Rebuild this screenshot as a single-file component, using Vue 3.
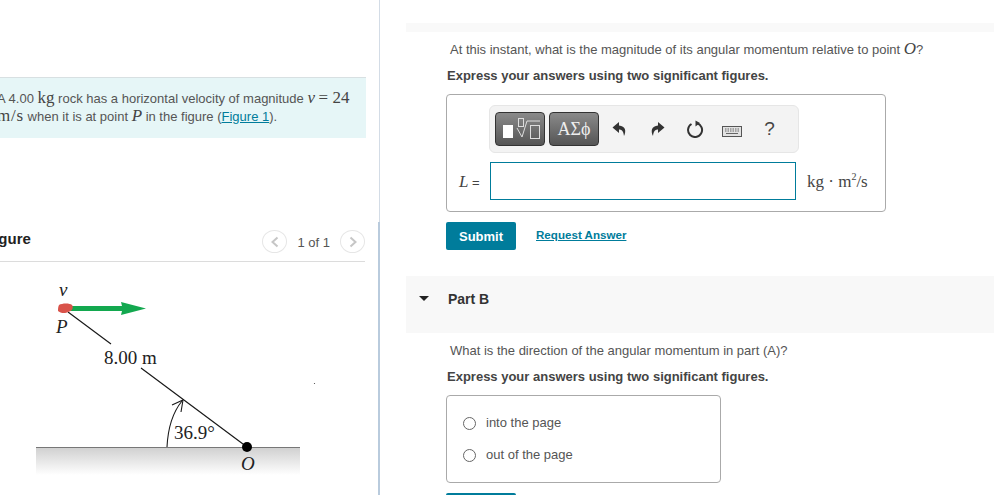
<script setup>
const choices = ['into the page', 'out of the page']
</script>

<template>
  <div class="page">
    <section class="left">
      <div class="intro">
        <p class="intro-text">A 4.00 <span class="m">kg</span> rock has a horizontal velocity of magnitude <i class="m">v</i> <span class="m">= 24</span><br><span class="m unit-ms">m/s</span> when it is at point <i class="m big">P</i> in the figure (<a>Figure 1</a>).</p>
      </div>
      <div class="figure">
        <header class="fig-head">
          <h2>Figure</h2>
          <div class="pager">
            <span class="circle"><svg width="10" height="12" viewBox="0 0 10 12"><path d="M7.5 1.5 2.5 6l5 4.5" fill="none" stroke="#c6c6c6" stroke-width="2"/></svg></span>
            <span class="count">1 of 1</span>
            <span class="circle"><svg width="10" height="12" viewBox="0 0 10 12"><path d="M2.5 1.5 7.5 6l-5 4.5" fill="none" stroke="#c6c6c6" stroke-width="2"/></svg></span>
          </div>
        </header>
        <svg class="diagram" width="378" height="225" viewBox="0 270 378 225">
          <defs>
            <linearGradient id="ground" x1="0" y1="0" x2="0" y2="1">
              <stop offset="0" stop-color="#cfcfcf"/>
              <stop offset="1" stop-color="#ffffff"/>
            </linearGradient>
          </defs>
          <rect x="36" y="447" width="264" height="28" fill="url(#ground)"/>
          <path d="M36 447.5H300" stroke="#777" stroke-width="1.2"/>
          <path d="M68 312 111 344M141 368 247 447" stroke="#1a1a1a" stroke-width="1.2" fill="none"/>
          <path d="M167 447C168 427 173 412 182 401" stroke="#1a1a1a" stroke-width="1.1" fill="none"/>
          <path d="M172 405 183 400 181 412" stroke="#1a1a1a" stroke-width="1.1" fill="none"/>
          <path d="M70 306H122L121 302 146 308.500 121 315 122 311H70Z" fill="#13a84f"/>
          <path d="M59 305C62 303 70 303 72 305 74 308 72 311 68 312 65 314 60 313 58 311 58 309 58 307 59 305Z" fill="#d9534a"/>
          <circle cx="247" cy="447" r="5" fill="#000"/>
          <circle cx="314.500" cy="383.500" r="0.600" fill="#444"/>
          <text x="59" y="296" class="fig-i">v</text>
          <text x="56" y="333" class="fig-i">P</text>
          <text x="104" y="364" class="fig-t">8.00 m</text>
          <text x="174" y="439" class="fig-t">36.9°</text>
          <text x="241" y="470" class="fig-i">O</text>
        </svg>
      </div>
    </section>

    <main class="right">
      <div class="strip-top"></div>
      <p class="question first">At this instant, what is the magnitude of its angular momentum relative to point <i class="m big">O</i>?</p>
      <p class="instruct">Express your answers using two significant figures.</p>

      <div class="answer">
        <div class="toolbar">
          <button class="tool">
            <svg width="42" height="26" viewBox="0 0 42 26">
              <rect x="4" y="9" width="10" height="13" fill="#fff"/>
              <rect x="19.500" y="2.500" width="5" height="8" fill="none" stroke="#ddd"/>
              <path d="M18 12l5 9 5-16h13" fill="none" stroke="#ddd"/>
              <rect x="31.500" y="9.500" width="9" height="13" fill="none" stroke="#ddd"/>
            </svg>
          </button>
          <button class="tool greek">ΑΣϕ</button>
          <span class="icon"><svg width="15" height="16" viewBox="0 0 15 16"><path d="M7 1 0.500 6.500 7 12V8.500c3 0 4.500 2 5 6.500 2.500-5 1.500-10-5-10.500Z" fill="#333"/></svg></span>
          <span class="icon"><svg width="15" height="16" viewBox="0 0 15 16"><path d="M8 1l6.500 5.500L8 12V8.500c-3 0-4.500 2-5 6.500C.5 10 1.500 5 8 4.500Z" fill="#333"/></svg></span>
          <span class="icon"><svg width="18" height="18" viewBox="0 0 18 18"><path d="M5.500 4A7 7 0 1 0 11 3.300" fill="none" stroke="#333" stroke-width="2"/><path d="M9.500 .5v6L14 3Z" fill="#333"/></svg></span>
          <span class="icon keys"><svg width="20" height="11" viewBox="0 0 20 11"><rect x=".5" y=".5" width="19" height="10" fill="#e2e2e2" stroke="#555"/><path d="M3 3h14M3 5h14" stroke="#666" stroke-dasharray="1.500 1"/><path d="M4 7.500h12" stroke="#666"/></svg></span>
          <span class="icon help">?</span>
        </div>
        <div class="input-row">
          <span class="lhs"><i class="m big">L</i> =</span>
          <div class="input"></div>
          <span class="unit m">kg · m<sup>2</sup>/s</span>
        </div>
      </div>

      <div class="actions">
        <button class="submit">Submit</button>
        <a class="request">Request Answer</a>
      </div>

      <div class="part">
        <span class="caret"></span>
        <h3>Part B</h3>
      </div>

      <p class="question second">What is the direction of the angular momentum in part (A)?</p>
      <p class="instruct">Express your answers using two significant figures.</p>

      <div class="choices">
        <label v-for="c in choices" :key="c" class="choice"><span class="radio"></span><span class="choice-text">{{ c }}</span></label>
      </div>
      <button class="submit tail"></button>
    </main>
  </div>
</template>

<style>
html, body { margin: 0; background: #fff; }
</style>

<style scoped>
.page {
  display: flex;
  width: 994px;
  height: 495px;
  overflow: hidden;
  font-family: "Liberation Sans", Arial, sans-serif;
  font-size: 13px;
  color: #555;
}
.left {
  width: 379px;
  flex: none;
  padding-top: 77px;
  border-right: 1px solid #d3dce6;
}
.intro {
  width: 366px;
  height: 61px;
  box-sizing: border-box;
  background: #e6f6f7;
  border-top: 1px solid #d8e0e2;
  padding-top: 11px;
}
.intro-text {
  margin: 0 0 0 -3px;
  line-height: 17px;
  white-space: nowrap;
}
.intro-text a {
  color: #007c9b;
  text-decoration: underline;
}
.m { font-family: "Liberation Serif", "DejaVu Serif", serif; font-size: 17px; line-height: 1; color: #444; }
.unit-ms { letter-spacing: 0.8px; }
.big { font-size: 17px; }
.figure {
  height: 273px;
  margin-top: 84px;
  border-right: 2px solid #b9cbdd;
  margin-right: -1px;
}
.fig-head {
  width: 365px;
  height: 40px;
  box-sizing: border-box;
  border-bottom: 1px solid #dcdcdc;
  display: flex;
  justify-content: space-between;
  align-items: flex-start;
  padding-top: 8px;
}
.fig-head h2 {
  margin: 1px 0 0 -15px;
  font-size: 15px;
  line-height: 16px;
  color: #222;
}
.pager {
  display: flex;
  align-items: center;
  color: #555;
}
.circle {
  width: 25px;
  height: 23px;
  box-sizing: border-box;
  border: 1px solid #e6e6e6;
  border-radius: 50%;
  display: flex;
  align-items: center;
  justify-content: center;
}
.count { margin: 2px 10px 0 10px; }
.diagram { display: block; margin-top: 8px; }
.fig-t { font-family: "Liberation Serif", serif; font-size: 19px; fill: #222; }
.fig-i { font-family: "Liberation Serif", serif; font-size: 19px; font-style: italic; fill: #222; }

.right {
  flex: 1;
  padding-left: 26px;
  min-width: 0;
}
.strip-top {
  height: 9px;
  margin-top: 23px;
  background: #f9f9f9;
}
.question {
  margin: 0 0 0 44px;
  line-height: 18px;
  white-space: nowrap;
}
.first { margin-top: 8px; }
.second { margin-top: 9px; }
.instruct {
  margin: 8px 0 0 41px;
  font-weight: 700;
  font-size: 13px;
  line-height: 18px;
  color: #444;
}
.answer {
  width: 440px;
  height: 118px;
  box-sizing: border-box;
  margin: 9px 0 0 40px;
  border: 1px solid #aaa;
  border-radius: 4px;
  padding: 10px 0 0 42px;
}
.toolbar {
  width: 310px;
  height: 48px;
  box-sizing: border-box;
  background: #f3f3f3;
  border: 1px solid #e6e6e6;
  border-radius: 6px;
  display: flex;
  align-items: center;
  gap: 4px;
  padding: 0 5px;
}
.tool {
  width: 50px;
  height: 34px;
  flex: none;
  padding: 0;
  border: 1px solid #333;
  border-radius: 4px;
  background: linear-gradient(#8a8a8a, #555);
  color: #eee;
  display: flex;
  align-items: center;
  justify-content: center;
}
.greek { font-family: "Liberation Serif", serif; font-size: 18px; }
.icon {
  width: 34px;
  flex: none;
  margin-left: -0.5px;
  display: flex;
  justify-content: center;
  align-items: center;
  color: #333;
}
.keys { padding-top: 5px; box-sizing: border-box; }
.help { font-size: 19px; color: #444; }
.input-row {
  display: flex;
  align-items: center;
  margin-top: 9px;
  margin-left: -30px;
}
.lhs { width: 31px; flex: none; color: #444; white-space: nowrap; }
.input {
  width: 306px;
  height: 38px;
  box-sizing: border-box;
  border: 1px solid #007c9b;
  background: #fff;
  flex: none;
}
.unit { margin-left: 11px; margin-top: 1px; white-space: nowrap; }
.unit sup { font-size: 10px; line-height: 0; }
.actions {
  display: flex;
  align-items: center;
  margin: 10px 0 0 40px;
}
.submit {
  width: 70px;
  height: 28px;
  padding: 0;
  border: 0;
  border-radius: 2px;
  background: #007c9b;
  color: #fff;
  font: 700 13px "Liberation Sans", Arial, sans-serif;
}
.request {
  margin: -3px 0 0 20px;
  color: #007c9b;
  font-weight: 700;
  font-size: 11.600px;
  text-decoration: underline;
}
.part {
  height: 57px;
  margin-top: 26px;
  background: #f8f8f8;
  display: flex;
  align-items: flex-start;
  padding: 15px 0 0 13px;
  box-sizing: border-box;
}
.caret {
  width: 0;
  height: 0;
  margin-top: 5px;
  border-left: 5.500px solid transparent;
  border-right: 5.500px solid transparent;
  border-top: 5.500px solid #222;
}
.part h3 {
  margin: 0 0 0 19px;
  font-size: 14px;
  line-height: 16px;
  color: #333;
}
.choices {
  width: 275px;
  height: 88px;
  box-sizing: border-box;
  margin: 9px 0 0 40px;
  border: 1px solid #aaa;
  border-radius: 4px;
  padding-top: 11px;
}
.choice {
  display: flex;
  align-items: center;
  height: 32px;
  padding-left: 16px;
}
.choice-text { margin-top: -2px; }
.radio {
  width: 13px;
  height: 13px;
  box-sizing: border-box;
  border: 1.500px solid #666;
  border-radius: 50%;
  margin-right: 10px;
}
.tail {
  display: block;
  margin: 10px 0 0 40px;
}
</style>
